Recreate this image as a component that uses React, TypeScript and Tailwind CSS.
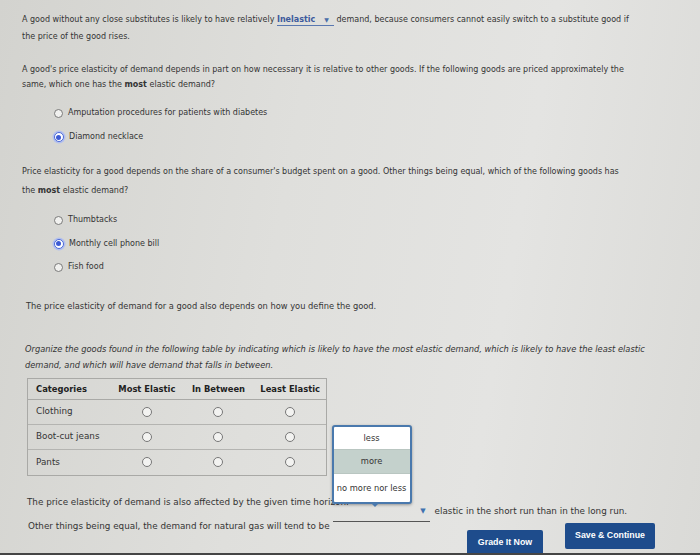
import React from "react";

type RadioProps = { checked?: boolean };

const Radio: React.FC<RadioProps> = ({ checked }) =>
  checked ? (
    <span className="flex h-[10px] w-[10px] shrink-0 items-center justify-center rounded-full border-[1.5px] border-[#4b69d6] bg-white ring-[1.5px] ring-[#b3c0ee]">
      <span className="h-[5px] w-[5px] rounded-full bg-[#3d5bd4]" />
    </span>
  ) : (
    <span className="h-[9px] w-[9px] shrink-0 rounded-full border border-[#7a7a7a] bg-[#f1f1ef]" />
  );

type OptionProps = { label: string; checked?: boolean; h: string };

const Option: React.FC<OptionProps> = ({ label, checked, h }) => (
  <div className={`flex items-center gap-[5.5px] pl-[31.5px] ${h}`}>
    <Radio checked={checked} />
    <span>{label}</span>
  </div>
);

const rows = ["Clothing", "Boot-cut jeans", "Pants"];

export default function App() {
  return (
    <div className="relative box-border h-[555px] w-[700px] overflow-hidden border-b-[2px] border-[#454545] bg-[linear-gradient(100deg,#d3d3cf_0%,#dfdfdc_40%,#e4e4e2_70%,#dadad7_100%)] pl-[22px] font-['DejaVu_Sans',sans-serif] text-[8px] text-[#343434]">
      {/* substitutes */}
      <p className="whitespace-nowrap pt-[12px] leading-[16.7px]">
        A good without any close substitutes is likely to have relatively{" "}
        <span className="inline-flex w-[57px] items-center justify-between border-b border-[#5a78b0] leading-[10px]">
          <span className="font-bold text-[#3d5a9c]">Inelastic</span>
          <span className="pr-[5px] text-[6px] text-[#4a6ea8]">▼</span>
        </span>{" "}
        demand, because consumers cannot easily switch to a substitute good if
        <br />
        the price of the good rises.
      </p>

      {/* necessity */}
      <p className="mt-[17px] whitespace-nowrap leading-[15px]">
        A good's price elasticity of demand depends in part on how necessary it is relative to other goods. If the
        following goods are priced approximately the
        <br />
        same, which one has the <span className="font-bold">most</span> elastic demand?
      </p>
      <div className="mt-[9px]">
        <Option label="Amputation procedures for patients with diabetes" h="h-[24px]" />
        <Option label="Diamond necklace" checked h="h-[24px]" />
      </div>

      {/* budget share */}
      <p className="mt-[13px] whitespace-nowrap leading-[19px]">
        Price elasticity for a good depends on the share of a consumer's budget spent on a good. Other things being
        equal, which of the following goods has
        <br />
        the <span className="font-bold">most</span> elastic demand?
      </p>
      <div className="mt-[8px]">
        <Option label="Thumbtacks" h="h-[23.5px]" />
        <Option label="Monthly cell phone bill" checked h="h-[23.5px]" />
        <Option label="Fish food" h="h-[23.5px]" />
      </div>

      {/* definition */}
      <p className="ml-[4px] mt-[20px] whitespace-nowrap text-[8.3px] leading-[15px]">
        The price elasticity of demand for a good also depends on how you define the good.
      </p>

      <p className="ml-[3px] mt-[27px] whitespace-nowrap text-[8.3px] italic leading-[16px]">
        Organize the goods found in the following table by indicating which is likely to have the most elastic demand,
        which is likely to have the least elastic
        <br />
        demand, and which will have demand that falls in between.
      </p>

      {/* table */}
      <div className="ml-[5px] mt-[5px] w-[300px] border border-[#a9a9a6] text-[8.8px]">
        <div className="grid h-[21px] grid-cols-[83px_1fr_1fr_1fr] items-center border-b border-[#a9a9a6] text-[8.4px] font-bold text-[#222]">
          <span className="pl-[8px]">Categories</span>
          <span className="text-center">Most Elastic</span>
          <span className="text-center">In Between</span>
          <span className="text-center">Least Elastic</span>
        </div>
        {rows.map((r, i) => (
          <div
            key={r}
            className={`grid h-[25px] grid-cols-[83px_1fr_1fr_1fr] items-center ${
              i < rows.length - 1 ? "border-b border-[#b4b4b1]" : ""
            }`}
          >
            <span className="pl-[8px]">{r}</span>
            {[0, 1, 2].map((c) => (
              <span key={c} className="flex justify-center">
                <span className="h-[10px] w-[10px] rounded-full border border-[#777] bg-[#f3f3f1]" />
              </span>
            ))}
          </div>
        ))}
      </div>

      {/* time horizon */}
      <p className="ml-[5px] mt-[21px] whitespace-nowrap text-[8.8px] leading-[10px]">
        The price elasticity of demand is also affected by the given time horizon.
      </p>

      <div className="ml-[6px] flex items-start text-[8.8px]">
        <span className="whitespace-nowrap pt-[13px] leading-[12px]">
          Other things being equal, the demand for natural gas will tend to be
        </span>
        <div className="relative ml-[3px] h-[15px] w-[97px] shrink-0 border-b border-[#555]">
          <span className="absolute right-[4px] top-[0px] text-[7px] leading-[8px] text-[#3f72b0]">▼</span>

          {/* open dropdown */}
          <div className="absolute bottom-full left-[-1px] mb-[3px] w-[80px] rounded-[3px] border-2 border-[#4a79ad] bg-white text-center text-[8.3px] text-[#333] shadow-[0_1px_3px_rgba(0,0,0,0.35)]">
            <div className="flex h-[22px] items-center justify-center">less</div>
            <div className="flex h-[25px] items-center justify-center border-y border-[#b9c6c1] bg-[#c4d1cc]">
              more
            </div>
            <div className="flex h-[28px] items-center justify-center">no more nor less</div>
            <span className="absolute left-[36px] top-full h-0 w-0 border-x-[5px] border-t-[5px] border-x-transparent border-t-[#4a79ad]" />
          </div>
        </div>
        <div className="ml-[5px] flex flex-1 flex-col pr-[45px]">
          <span className="whitespace-nowrap leading-[8px]">elastic in the short run than in the long run.</span>
          <div className="mt-[8px] flex items-start justify-end gap-[22px] font-['Liberation_Sans',sans-serif] text-[8.8px] font-bold text-white">
            <button className="mt-[7px] h-[25px] w-[76px] rounded-[2px] bg-[#1e4c8c]">Grade It Now</button>
            <button className="h-[26px] w-[90px] rounded-[2px] bg-[#1e4c8c]">Save &amp; Continue</button>
          </div>
        </div>
      </div>
    </div>
  );
}
